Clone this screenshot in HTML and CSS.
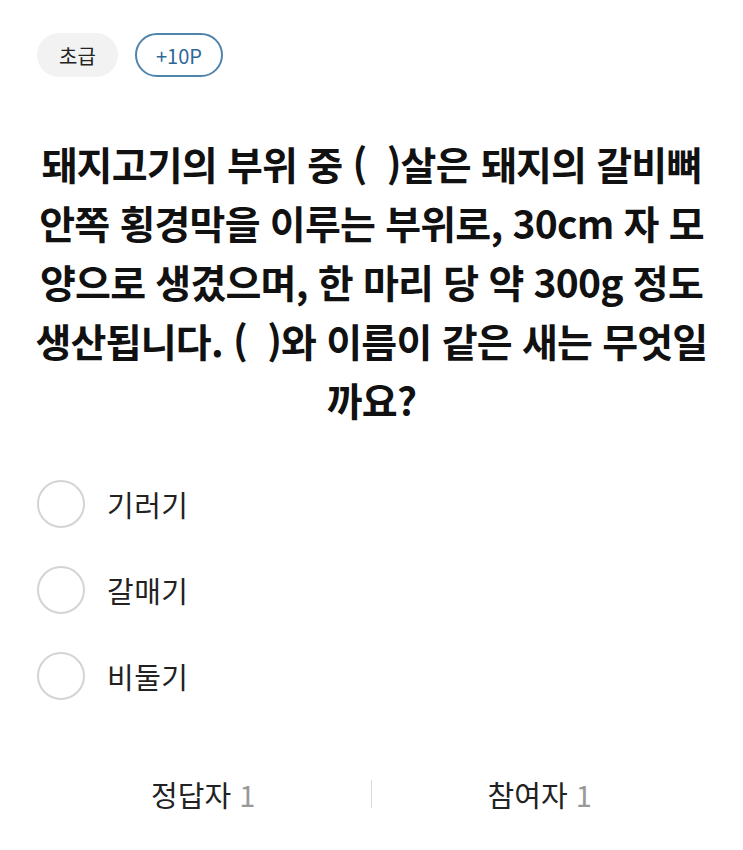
FILE: index.html
```html
<!DOCTYPE html>
<html lang="ko">
<head>
<meta charset="utf-8">
<link rel="stylesheet" href="styles.css">
</head>
<body>
<div class="page">
  <div class="chips">
    <span class="chip chip-level">초급</span>
    <span class="chip chip-point">+10P</span>
  </div>
  <h1 class="question">돼지고기의 부위 중 (&nbsp;&nbsp;)살은 돼지의 갈비뼈<br>안쪽 횡경막을 이루는 부위로, 30cm 자 모<br>양으로 생겼으며, 한 마리 당 약 300g 정도<br>생산됩니다. (&nbsp;&nbsp;)와 이름이 같은 새는 무엇일<br>까요?</h1>
  <ul class="options">
    <li class="option"><span class="radio"></span><span class="label">기러기</span></li>
    <li class="option"><span class="radio"></span><span class="label">갈매기</span></li>
    <li class="option"><span class="radio"></span><span class="label">비둘기</span></li>
  </ul>
  <div class="stats">
    <div class="stat">정답자 <span class="num">1</span></div>
    <div class="divider"></div>
    <div class="stat">참여자 <span class="num">1</span></div>
  </div>
</div>
</body>
</html>
```
FILE: styles.css
```css
html, body {
  margin: 0;
  padding: 0;
  background: #fff;
}
body {
  font-family: "Noto Sans CJK KR", "Noto Sans", sans-serif;
  color: #1a1a1a;
}
.page {
  width: 743px;
  padding: 33px 0 0 0;
  box-sizing: border-box;
}
.chips {
  display: flex;
  gap: 17px;
  padding-left: 37px;
}
.chip {
  display: inline-flex;
  align-items: center;
  justify-content: center;
  height: 44px;
  border-radius: 22px;
  font-size: 20px;
  box-sizing: border-box;
}
.chip-level {
  width: 81px;
  background: #f2f2f2;
  color: #222;
}
.chip-point {
  width: 88px;
  border: 2px solid #4f84ad;
  color: #2f6797;
}
.question {
  margin: 57px 0 0 0;
  padding: 0;
  font-size: 39px;
  line-height: 59px;
  font-weight: 700;
  text-align: center;
  letter-spacing: -0.8px;
  white-space: nowrap;
  color: #111;
}
.options {
  list-style: none;
  margin: 32px 0 0 0;
  padding: 0 0 0 37px;
}
.option {
  display: flex;
  align-items: center;
  height: 86px;
}
.radio {
  width: 48px;
  height: 48px;
  border: 2px solid #d4d4d4;
  border-radius: 50%;
  box-sizing: border-box;
  flex: none;
}
.label {
  margin-left: 22px;
  font-size: 29px;
  letter-spacing: 0.5px;
  color: #222;
}
.stats {
  display: grid;
  grid-template-columns: 1fr 2px 1fr;
  align-items: center;
  margin-top: 50px;
  padding: 0 36px;
  height: 50px;
}
.stat {
  text-align: center;
  font-size: 29px;
  color: #222;
}
.divider {
  width: 1px;
  height: 28px;
  background: #d8d8d8;
}
.num {
  color: #999;
}
```
